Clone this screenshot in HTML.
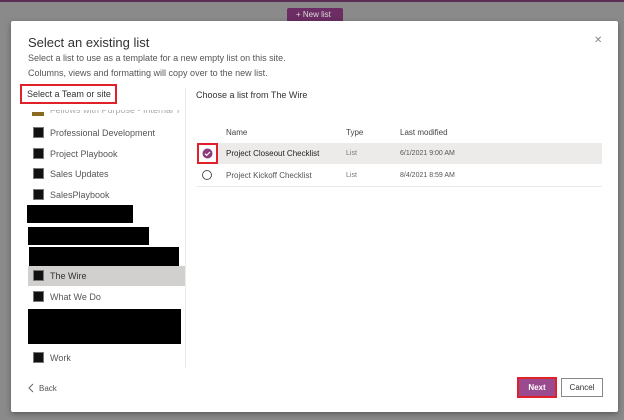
<!DOCTYPE html><html><head><style>
*{margin:0;padding:0;box-sizing:border-box}
body{width:624px;height:420px;background:#8a8a8a;font-family:"Liberation Sans",sans-serif;position:relative;overflow:hidden;color:#323130}
.a{position:absolute}
.dlg{left:11px;top:21px;width:607px;height:391px;background:#fff;border-radius:2px;box-shadow:0 2px 6px rgba(0,0,0,.35)}
.t{font-size:9px;white-space:nowrap}
.ic{width:11px;height:11px;background:#111;border:1px solid #777}
.blk{background:#000}
</style></head><body>
<div class="a" style="left:0;top:0;width:624px;height:2px;background:#5a2d55"></div>
<div class="a" style="left:287px;top:8px;width:56px;height:14px;background:#6b2d63;border-radius:2px;color:#ddd;font-size:8px;line-height:14px;padding-left:9px">+ New list</div>
<div class="a dlg"></div>
<div class="a" style="left:594px;top:35px;font-size:10px;color:#888">✕</div>
<div class="a" style="left:28px;top:35px;font-size:13px;color:#323130">Select an existing list</div>
<div class="a t" style="left:28px;top:53px;color:#555">Select a list to use as a template for a new empty list on this site.</div>
<div class="a t" style="left:28px;top:68px;color:#555">Columns, views and formatting will copy over to the new list.</div>
<div class="a" style="left:20px;top:84px;width:97px;height:20px;border:2px solid #e0202a"></div>
<div class="a" style="left:27px;top:89px;font-size:9px;color:#323130">Select a Team or site</div>
<div class="a" style="left:185px;top:88px;width:1px;height:280px;background:#edebe9"></div>
<div class="a" style="left:196px;top:90px;font-size:9px">Choose a list from The Wire</div>
<div class="a" style="left:32px;top:112px;width:12px;height:4px;background:#8a6a20"></div>
<div class="a" style="left:50px;top:110px;height:5px;overflow:hidden;width:130px"><div class="t" style="color:#aaa;margin-top:-5px">Fellows with Purpose - Internal Team</div></div>
<div class="a ic" style="left:33px;top:127px"></div><div class="a t" style="left:50px;top:128px;color:#555">Professional Development</div>
<div class="a ic" style="left:33px;top:148px"></div><div class="a t" style="left:50px;top:149px;color:#555">Project Playbook</div>
<div class="a ic" style="left:33px;top:168px"></div><div class="a t" style="left:50px;top:169px;color:#555">Sales Updates</div>
<div class="a ic" style="left:33px;top:189px"></div><div class="a t" style="left:50px;top:190px;color:#555">SalesPlaybook</div>
<div class="a blk" style="left:27px;top:205px;width:106px;height:18px"></div>
<div class="a blk" style="left:28px;top:227px;width:121px;height:18px"></div>
<div class="a blk" style="left:29px;top:247px;width:150px;height:19px"></div>
<div class="a" style="left:28px;top:266px;width:157px;height:20px;background:#d2d0ce"></div>
<div class="a ic" style="left:33px;top:270px"></div><div class="a t" style="left:50px;top:271px;color:#323130">The Wire</div>
<div class="a ic" style="left:33px;top:291px"></div><div class="a t" style="left:50px;top:292px;color:#555">What We Do</div>
<div class="a blk" style="left:28px;top:309px;width:153px;height:35px"></div>
<div class="a ic" style="left:33px;top:352px"></div><div class="a t" style="left:50px;top:353px;color:#555">Work</div>
<svg class="a" style="left:28px;top:383px" width="6" height="10" viewBox="0 0 6 10"><path d="M5 1L1 5l4 4" fill="none" stroke="#666" stroke-width="1"/></svg>
<div class="a t" style="left:39px;top:384px;color:#555;font-size:8px">Back</div>
<div class="a" style="left:226px;top:128px;font-size:8px;color:#444">Name</div>
<div class="a" style="left:346px;top:128px;font-size:8px;color:#444">Type</div>
<div class="a" style="left:400px;top:128px;font-size:8px;color:#444">Last modified</div>
<div class="a" style="left:198px;top:143px;width:404px;height:21px;background:#edebe9"></div>
<div class="a" style="left:197px;top:143px;width:21px;height:21px;border:2px solid #e0202a;background:#fff"></div>
<svg class="a" style="left:202px;top:148px" width="11" height="11" viewBox="0 0 11 11"><circle cx="5.5" cy="5.5" r="5" fill="#8c3a7e"/><path d="M3 5.7l1.7 1.6L8 4" fill="none" stroke="#fff" stroke-width="1.2"/></svg>
<div class="a" style="left:226px;top:149px;font-size:8px;color:#222">Project Closeout Checklist</div>
<div class="a" style="left:346px;top:150px;font-size:7px;color:#777">List</div>
<div class="a" style="left:400px;top:150px;font-size:7px;color:#555">6/1/2021 9:00 AM</div>
<div class="a" style="left:202px;top:170px;width:10px;height:10px;border-radius:50%;border:1px solid #555"></div>
<div class="a" style="left:226px;top:171px;font-size:8px;color:#555">Project Kickoff Checklist</div>
<div class="a" style="left:346px;top:172px;font-size:7px;color:#777">List</div>
<div class="a" style="left:400px;top:172px;font-size:7px;color:#555">8/4/2021 8:59 AM</div>
<div class="a" style="left:196px;top:186px;width:406px;height:1px;background:#edebe9"></div>
<div class="a" style="left:517px;top:377px;width:40px;height:21px;border:2px solid #e0202a;background:#9a4a8e;color:#fff;font-size:8px;font-weight:bold;line-height:17px;text-align:center">Next</div>
<div class="a" style="left:561px;top:378px;width:42px;height:19px;border:1px solid #8a8886;background:#fff;font-size:8px;line-height:17px;text-align:center">Cancel</div>
</body></html>
